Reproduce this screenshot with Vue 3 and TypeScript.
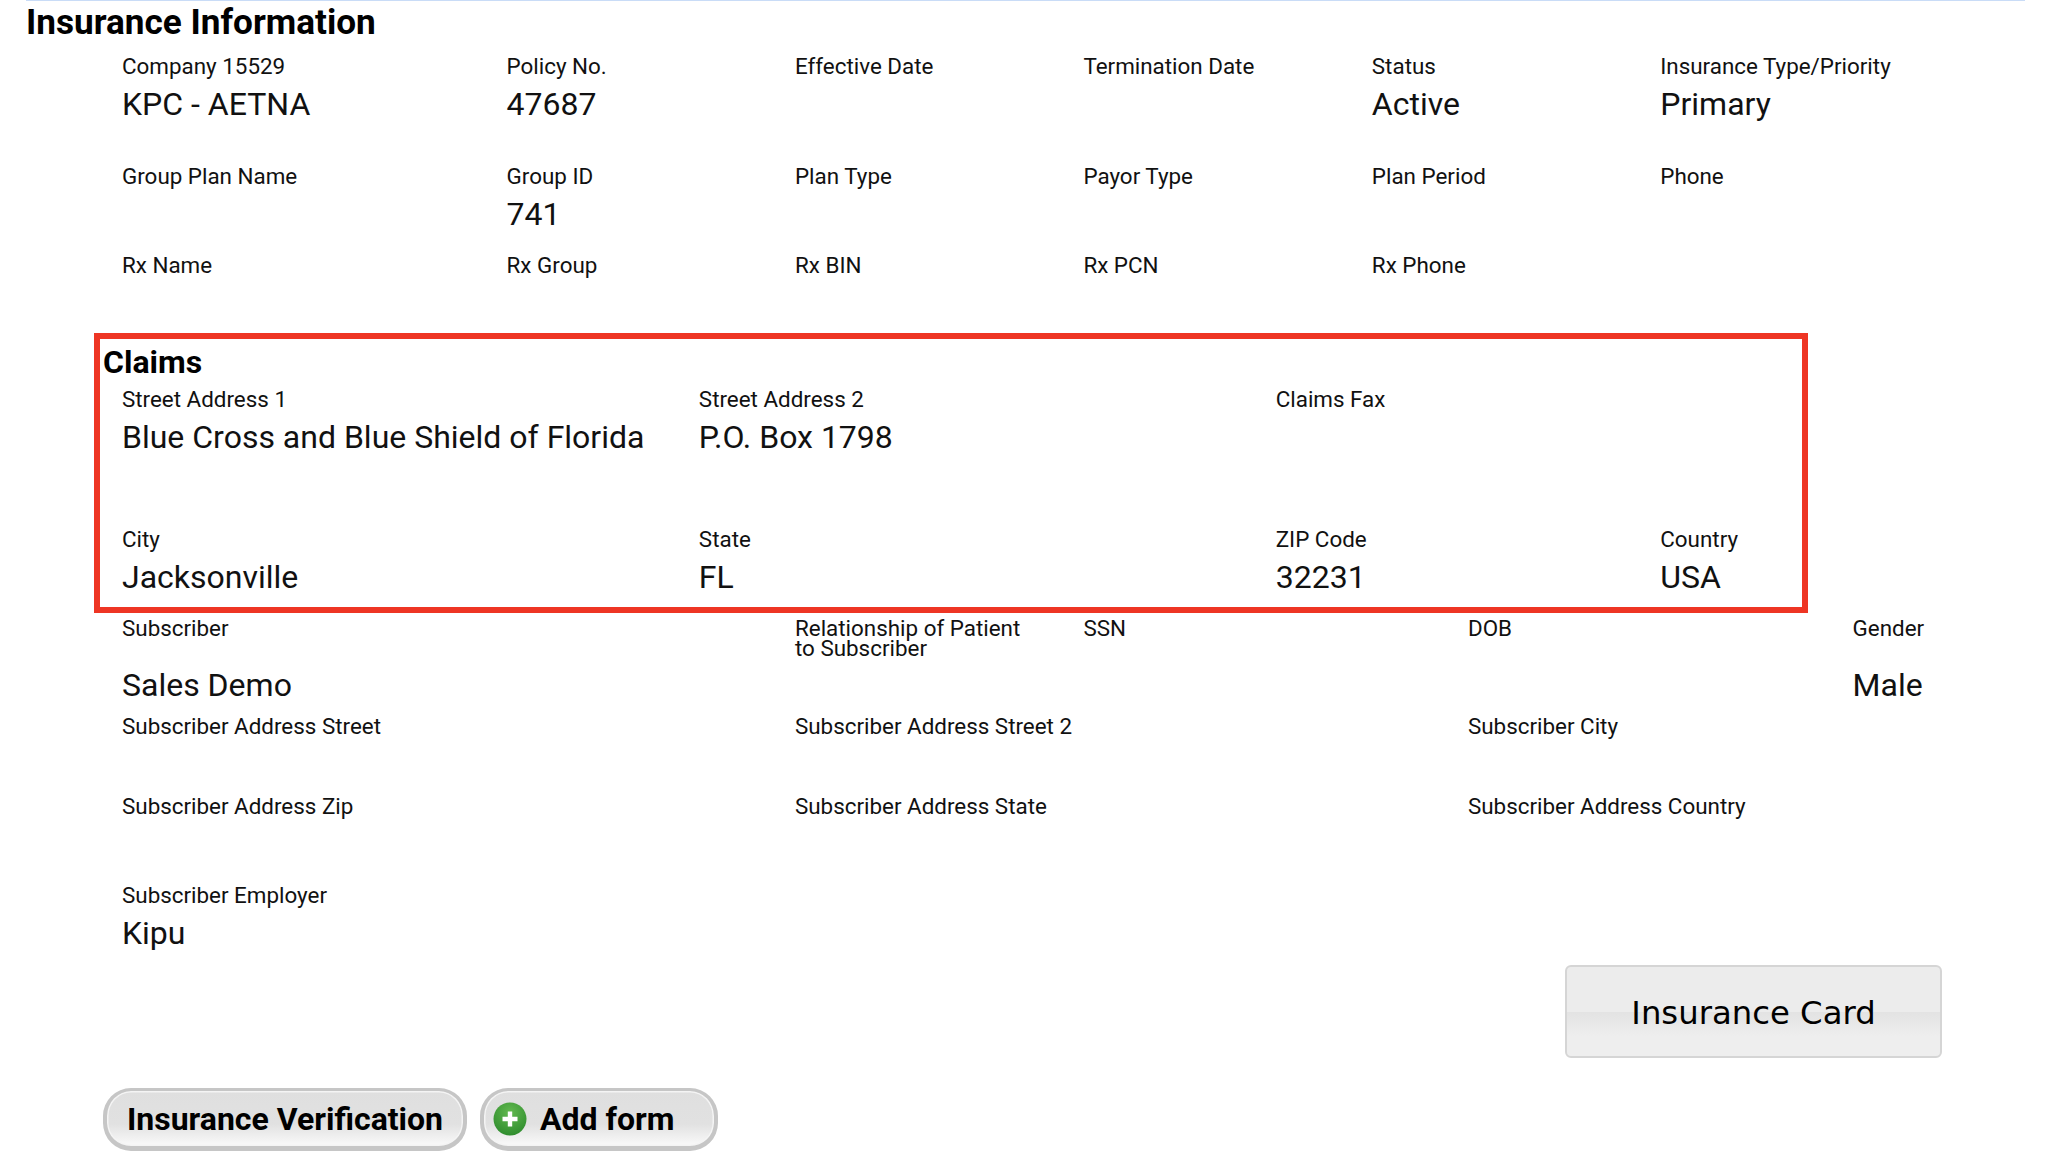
<script setup lang="ts">
interface Field {
  label: string
  value?: string
  col: number
  span: number
}
interface Row {
  cls: string
  fields: Field[]
}

const topRows: Row[] = [
  {
    cls: 'r1',
    fields: [
      { label: 'Company 15529', value: 'KPC - AETNA', col: 1, span: 4 },
      { label: 'Policy No.', value: '47687', col: 5, span: 3 },
      { label: 'Effective Date', col: 8, span: 3 },
      { label: 'Termination Date', col: 11, span: 3 },
      { label: 'Status', value: 'Active', col: 14, span: 3 },
      { label: 'Insurance Type/Priority', value: 'Primary', col: 17, span: 4 }
    ]
  },
  {
    cls: 'r2',
    fields: [
      { label: 'Group Plan Name', col: 1, span: 4 },
      { label: 'Group ID', value: '741', col: 5, span: 3 },
      { label: 'Plan Type', col: 8, span: 3 },
      { label: 'Payor Type', col: 11, span: 3 },
      { label: 'Plan Period', col: 14, span: 3 },
      { label: 'Phone', col: 17, span: 4 }
    ]
  },
  {
    cls: 'r3',
    fields: [
      { label: 'Rx Name', col: 1, span: 4 },
      { label: 'Rx Group', col: 5, span: 3 },
      { label: 'Rx BIN', col: 8, span: 3 },
      { label: 'Rx PCN', col: 11, span: 3 },
      { label: 'Rx Phone', col: 14, span: 3 }
    ]
  }
]

const claimRows: Row[] = [
  {
    cls: 'c1',
    fields: [
      { label: 'Street Address 1', value: 'Blue Cross and Blue Shield of Florida', col: 1, span: 6 },
      { label: 'Street Address 2', value: 'P.O. Box 1798', col: 7, span: 6 },
      { label: 'Claims Fax', col: 13, span: 4 }
    ]
  },
  {
    cls: 'c2',
    fields: [
      { label: 'City', value: 'Jacksonville', col: 1, span: 6 },
      { label: 'State', value: 'FL', col: 7, span: 6 },
      { label: 'ZIP Code', value: '32231', col: 13, span: 4 },
      { label: 'Country', value: 'USA', col: 17, span: 3 }
    ]
  }
]

const subRows: Row[] = [
  {
    cls: 's1',
    fields: [
      { label: 'Subscriber', value: 'Sales Demo', col: 1, span: 7 },
      { label: 'Relationship of Patient to Subscriber', col: 8, span: 3 },
      { label: 'SSN', col: 11, span: 4 },
      { label: 'DOB', col: 15, span: 4 },
      { label: 'Gender', value: 'Male', col: 19, span: 2 }
    ]
  },
  {
    cls: 's2',
    fields: [
      { label: 'Subscriber Address Street', col: 1, span: 7 },
      { label: 'Subscriber Address Street 2', col: 8, span: 7 },
      { label: 'Subscriber City', col: 15, span: 6 }
    ]
  },
  {
    cls: 's3',
    fields: [
      { label: 'Subscriber Address Zip', col: 1, span: 7 },
      { label: 'Subscriber Address State', col: 8, span: 7 },
      { label: 'Subscriber Address Country', col: 15, span: 6 }
    ]
  },
  {
    cls: 's4',
    fields: [{ label: 'Subscriber Employer', value: 'Kipu', col: 1, span: 7 }]
  }
]

const place = (f: Field) => ({ gridColumn: `${f.col} / span ${f.span}` })
</script>

<template>
  <div class="page">
    <div class="rule"></div>
    <h1 class="title">Insurance Information</h1>

    <section class="rows top">
      <div v-for="row in topRows" :key="row.cls" class="row" :class="row.cls">
        <div v-for="f in row.fields" :key="f.label" class="field" :style="place(f)">
          <div class="label">{{ f.label }}</div>
          <div v-if="f.value" class="value">{{ f.value }}</div>
        </div>
      </div>
    </section>

    <section class="claims">
      <h2 class="claims-title">Claims</h2>
      <div v-for="row in claimRows" :key="row.cls" class="row" :class="row.cls">
        <div v-for="f in row.fields" :key="f.label" class="field" :style="place(f)">
          <div class="label">{{ f.label }}</div>
          <div v-if="f.value" class="value">{{ f.value }}</div>
        </div>
      </div>
    </section>

    <section class="rows subs">
      <div v-for="row in subRows" :key="row.cls" class="row" :class="row.cls">
        <div v-for="f in row.fields" :key="f.label" class="field" :style="place(f)">
          <div class="label">{{ f.label }}</div>
          <div v-if="f.value" class="value">{{ f.value }}</div>
        </div>
      </div>
    </section>

    <div class="card-row">
      <button class="card-btn" type="button">Insurance Card</button>
    </div>

    <div class="actions">
      <button class="pill verify" type="button">Insurance Verification</button>
      <button class="pill add" type="button">
        <svg class="plus" viewBox="0 0 34 34" width="34" height="34" aria-hidden="true">
          <defs>
            <radialGradient id="plusFill" cx="50%" cy="30%" r="75%">
              <stop offset="0%" stop-color="#62b94f" />
              <stop offset="100%" stop-color="#2c8a2c" />
            </radialGradient>
          </defs>
          <circle cx="17" cy="17" r="16.5" fill="url(#plusFill)" />
          <path d="M17 9.5v15M9.5 17h15" stroke="#fff" stroke-width="4.4" fill="none" />
        </svg>
        <span>Add form</span>
      </button>
    </div>
  </div>
</template>

<style scoped>
.page {
  width: 2050px;
  height: 1152px;
  box-sizing: border-box;
  overflow: hidden;
  background: #fff;
  font-family: Roboto, "Liberation Sans", sans-serif;
  color: #000;
}
.rule {
  height: 1px;
  margin: 0 25px 0 26px;
  background: #c9dcf7;
}
.title {
  margin: 0 0 0 26px;
  font-size: 35.15px;
  line-height: 42px;
  font-weight: 700;
}
.row {
  display: grid;
  grid-template-columns: repeat(20, 96.15px);
  align-content: start;
}
.top {
  margin: 12px 0 0 122px;
}
.label {
  font-size: 22.4px;
  line-height: 22px;
  color: #111;
}
.value {
  margin-top: 7px;
  font-size: 32px;
  line-height: 40px;
  color: #111;
}
.r1 {
  height: 110px;
}
.r2 {
  height: 89px;
}
.r3 {
  height: 79px;
}
.claims {
  box-sizing: border-box;
  height: 280px;
  margin-left: 94px;
  width: 1714px;
  border: 6px solid #ee3524;
  padding: 5px 0 0 3px;
}
.claims-title {
  margin: 0 0 8px;
  font-size: 32px;
  line-height: 36px;
  font-weight: 700;
}
.claims .row {
  margin-left: 19px;
}
.c1 {
  height: 140px;
}
.subs {
  margin: 5px 0 0 122px;
}
.s1 {
  height: 97px;
}
.s1 .label {
  min-height: 47px;
  line-height: 20px;
  max-width: 235px;
}
.s1 .value {
  margin-top: 0;
}
.s2 {
  height: 80px;
}
.s3 {
  height: 89px;
}
.s4 {
  height: 69px;
}
.card-row {
  display: flex;
  justify-content: flex-end;
  margin-top: 12px;
  padding-right: 108px;
}
.card-btn {
  width: 377px;
  height: 93px;
  box-sizing: border-box;
  border: 2px solid #d5d5d5;
  border-radius: 6px;
  background: linear-gradient(#ececec 0%, #ececec 50%, #e3e3e3 51%, #eeeeee 78%, #eeeeee 100%);
  color: #000;
  font-family: "DejaVu Sans", sans-serif;
  font-size: 32.3px;
  padding: 3px 0 0;
}
.actions {
  display: flex;
  gap: 13px;
  margin: 30px 0 0 103px;
}
.pill {
  box-sizing: border-box;
  height: 63px;
  border: 4px solid #c6c6c6;
  border-top-width: 3px;
  border-bottom-width: 5px;
  border-radius: 28px;
  background: linear-gradient(#dfdfdf 0%, #e1e1e1 60%, #fafafa 100%);
  box-shadow: inset 0 0 0 1.5px #f4f4f4;
  color: #000;
  font-family: Roboto, "Liberation Sans", sans-serif;
  font-size: 32px;
  font-weight: 700;
  padding: 0;
}
.verify {
  width: 364px;
}
.add {
  width: 238px;
  display: flex;
  align-items: center;
  gap: 13px;
  padding-left: 9px;
}
.plus {
  flex: none;
}
</style>
